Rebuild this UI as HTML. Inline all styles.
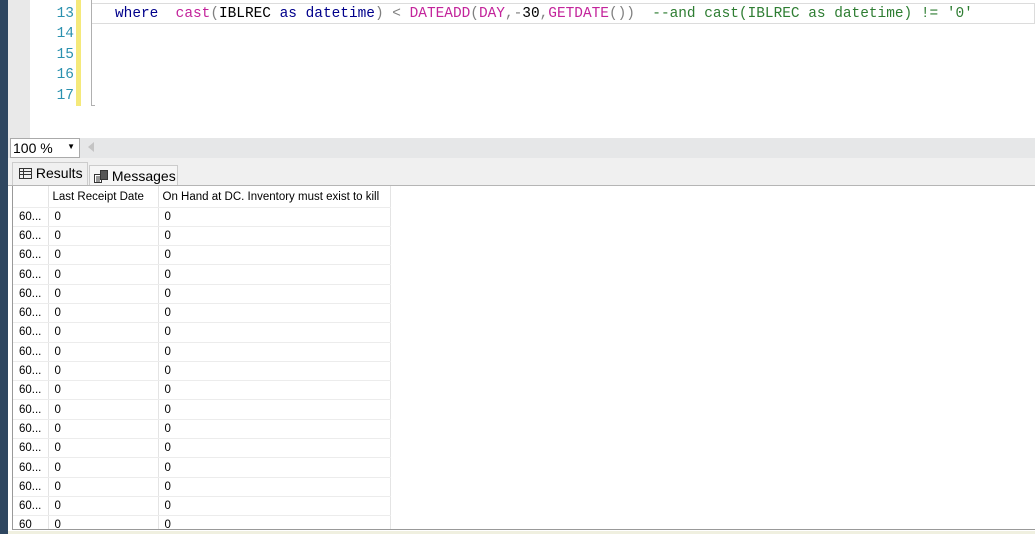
<!DOCTYPE html>
<html><head><meta charset="utf-8"><style>
*{margin:0;padding:0;box-sizing:border-box}
body{width:1035px;height:534px;overflow:hidden;background:#fff;position:relative;font-family:"Liberation Sans",sans-serif}
.abs{position:absolute}
.code{font-family:"Liberation Mono",monospace;font-size:14.45px;white-space:pre;color:#000}
.ln{font-family:"Liberation Mono",monospace;font-size:14.5px;color:#2b91af;position:absolute;left:54px;width:20px;text-align:right}
.kw{color:#00008b}.fn{color:#c3249b}.gr{color:#808080}.cm{color:#2e7d32}
table{border-collapse:collapse;font-size:11.5px;color:#000}
td{height:19.3px;border-right:1px solid #e4e4e4;border-bottom:1px solid #ececec;padding:0 0 0 6px;vertical-align:middle}
</style></head><body>
<div class="abs" style="left:0;top:0;width:8px;height:534px;background:#2e4660"></div>
<div class="abs" style="left:8px;top:0;width:22px;height:138px;background:#e9e9e9"></div>
<div class="abs" style="left:76px;top:0;width:5px;height:106px;background:#f5e97a"></div>
<div class="abs" style="left:91px;top:0;width:1px;height:106px;background:#b0b0b0"></div>
<div class="abs" style="left:91px;top:105px;width:4px;height:1px;background:#b0b0b0"></div>
<div class="abs" style="left:92px;top:3px;width:943px;height:21px;border:1px solid #dcdcdc;border-left:none"></div>
<div class="ln" style="top:6px">13</div>
<div class="ln" style="top:26px">14</div>
<div class="ln" style="top:47px">15</div>
<div class="ln" style="top:67px">16</div>
<div class="ln" style="top:88px">17</div>
<div class="abs code" style="left:115px;top:6px"><span class="kw">where</span>  <span class="fn">cast</span><span class="gr">(</span>IBLREC <span class="kw">as</span> <span class="kw">datetime</span><span class="gr">)</span> <span class="gr">&lt;</span> <span class="fn">DATEADD</span><span class="gr">(</span><span class="fn">DAY</span><span class="gr">,-</span>30<span class="gr">,</span><span class="fn">GETDATE</span><span class="gr">())</span>  <span class="cm">--and cast(IBLREC as datetime) != '0'</span></div>
<div class="abs" style="left:8px;top:138px;width:1027px;height:20px;background:#e6e7e8"></div>
<div class="abs" style="left:10px;top:138px;width:70px;height:20px;background:#fff;border:1px solid #aaa;font-size:14px;padding:1px 0 0 2px">100 %<span style="position:absolute;right:4px;top:3px;font-size:8px">▼</span></div>
<div class="abs" style="left:88px;top:142px;width:0;height:0;border-top:5px solid transparent;border-bottom:5px solid transparent;border-right:6px solid #c4c4c4"></div>
<div class="abs" style="left:8px;top:158px;width:1027px;height:28px;background:#f0f0f0"></div>
<div class="abs" style="left:12px;top:162px;width:76px;height:24px;background:#f0f0f0;border:1px solid #ccc;border-bottom:none;font-size:14px;padding:2px 0 0 6px">
<svg width="13" height="11" style="vertical-align:-1px"><rect x="0.5" y="0.5" width="12" height="10" fill="none" stroke="#333"/><path d="M0 3.5H13M0 6.5H13M4.5 0V11" stroke="#333"/></svg> Results</div>
<div class="abs" style="left:89px;top:165px;width:89px;height:21px;background:#f6f6f6;border:1px solid #ccc;border-bottom:none;font-size:14px;padding:2px 0 0 4px">
<svg width="14" height="13" style="vertical-align:-2px"><rect x="0.5" y="4.5" width="7" height="8" fill="#fff" stroke="#333"/><rect x="6.5" y="0.5" width="7" height="9" fill="#555" stroke="#333"/><path d="M2 7H6M2 9H6M2 11H6" stroke="#333"/></svg> Messages</div>
<div class="abs" style="left:8px;top:185px;width:1027px;height:1px;background:#b5b5b5"></div>
<div class="abs" style="left:12px;top:186px;width:1023px;height:344px;border-left:1px solid #999;border-bottom:1px solid #999;overflow:hidden">
<table>
<tr><td style="width:35px;height:21px"></td><td style="width:110px;padding-left:4px;padding-top:2px">Last Receipt Date</td><td style="width:232px;padding-left:4px;padding-top:2px">On Hand at DC. Inventory must exist to kill</td></tr>
<tr><td>60...</td><td>0</td><td>0</td></tr>
<tr><td>60...</td><td>0</td><td>0</td></tr>
<tr><td>60...</td><td>0</td><td>0</td></tr>
<tr><td>60...</td><td>0</td><td>0</td></tr>
<tr><td>60...</td><td>0</td><td>0</td></tr>
<tr><td>60...</td><td>0</td><td>0</td></tr>
<tr><td>60...</td><td>0</td><td>0</td></tr>
<tr><td>60...</td><td>0</td><td>0</td></tr>
<tr><td>60...</td><td>0</td><td>0</td></tr>
<tr><td>60...</td><td>0</td><td>0</td></tr>
<tr><td>60...</td><td>0</td><td>0</td></tr>
<tr><td>60...</td><td>0</td><td>0</td></tr>
<tr><td>60...</td><td>0</td><td>0</td></tr>
<tr><td>60...</td><td>0</td><td>0</td></tr>
<tr><td>60...</td><td>0</td><td>0</td></tr>
<tr><td>60...</td><td>0</td><td>0</td></tr>
<tr><td>60</td><td>0</td><td>0</td></tr>
</table></div>
<div class="abs" style="left:8px;top:531px;width:1027px;height:3px;background:#f0f0e0"></div>
</body></html>
